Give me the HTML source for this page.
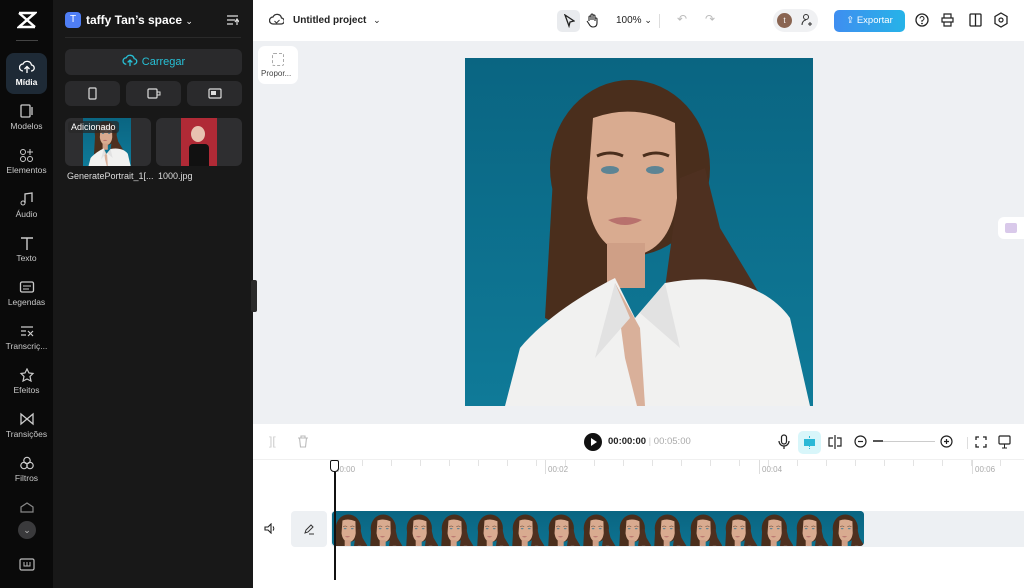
<!DOCTYPE html>
<html><head><meta charset="utf-8"><style>
*{margin:0;padding:0;box-sizing:border-box}
body{width:1024px;height:588px;overflow:hidden;font-family:"Liberation Sans",sans-serif;background:#eef0f3;position:relative}
.abs{position:absolute}
.nav{left:0;top:0;width:53px;height:588px;background:#0a0a0a}
.panel{left:53px;top:0;width:200px;height:588px;background:#181818}
.ni{position:absolute;left:0;width:53px;text-align:center;color:#c9c9c9;font-size:8.5px}
.ni svg{display:block;margin:0 auto 3px}
.top{left:253px;top:0;width:771px;height:41px;background:#fff}
.tl{left:253px;top:424px;width:771px;height:164px;background:#fff}
.btn{background:#2a2a2c;border-radius:6px;position:absolute}
.g{color:#222;font-size:10px}
</style></head><body>
<svg width="0" height="0" style="position:absolute"><defs>
<linearGradient id="bg" x1="0" y1="0" x2="0" y2="1"><stop offset="0" stop-color="#0a6582"/><stop offset="1" stop-color="#0f7a98"/></linearGradient>
<g id="por">
<rect width="348" height="348" fill="url(#bg)"/>
<ellipse cx="165" cy="110" rx="80" ry="88" fill="#4a2e1c"/>
<path d="M88 120 L80 260 L110 275 L150 250 L160 200 L100 120Z" fill="#4a2e1c"/>
<path d="M240 110 L255 170 L300 245 L250 250 L200 230 L215 120Z" fill="#4e3020"/>
<path d="M128 60 Q168 45 210 65 L212 140 Q206 192 168 198 Q128 192 122 140Z" fill="#d9ab90"/>
<rect x="142" y="185" width="38" height="45" fill="#cf9f86"/>
<path d="M143 162 Q160 156 177 162 Q160 172 143 162Z" fill="#b8716d"/>
<ellipse cx="145" cy="112" rx="9" ry="4" fill="#5d8494"/><ellipse cx="190" cy="112" rx="9" ry="4" fill="#5d8494"/>
<path d="M132 98 Q145 92 158 98 M178 98 Q191 92 204 98" stroke="#4a2e1c" stroke-width="3" fill="none"/>
<path d="M40 348 L55 290 C80 260 120 235 150 220 L170 260 L200 225 C250 215 300 225 325 260 L345 348Z" fill="#f1f1f0"/>
<path d="M150 225 L160 300 L172 348 L180 348 L175 270 Z" fill="#d9b09a"/>
<path d="M150 225 L130 300 L165 260Z M200 225 L215 290 L175 255Z" fill="#e2e2e2"/>
</g></defs></svg>

<div class="abs nav">
 <svg class="abs" style="left:17px;top:11px" width="20" height="18" viewBox="0 0 20 18"><path d="M2 2h16L2 16h16" fill="none" stroke="#fff" stroke-width="2.4"/><path d="M2 2l16 14M18 2L2 16" stroke="#fff" stroke-width="2.4"/></svg>
 <div class="abs" style="left:16px;top:40px;width:22px;height:1px;background:#444"></div>
 <div class="abs" style="left:6px;top:53px;width:41px;height:41px;background:#1e2a36;border-radius:8px"></div>
 <div class="ni" style="top:60px;color:#fff;font-weight:bold"><svg width="16" height="14" viewBox="0 0 16 14"><path d="M4 11a3.5 3.5 0 0 1 0-7 4.5 4.5 0 0 1 8.5 1 3 3 0 0 1-.5 6M8 13V7m-2.5 2L8 6.5 10.5 9" fill="none" stroke="#fff" stroke-width="1.3"/></svg>Mídia</div>
 <div class="ni" style="top:104px"><svg width="16" height="14"><rect x="2" y="1" width="9" height="12" rx="1" fill="none" stroke="#ccc" stroke-width="1.3"/><path d="M13 3v8" stroke="#ccc" stroke-width="1.3"/></svg>Modelos</div>
 <div class="ni" style="top:148px"><svg width="16" height="14"><circle cx="4" cy="4" r="2.5" fill="none" stroke="#ccc"/><circle cx="4" cy="11" r="2.5" fill="none" stroke="#ccc"/><circle cx="11" cy="11" r="2.5" fill="none" stroke="#ccc"/><path d="M11 1v6M8 4h6" stroke="#ccc"/></svg>Elementos</div>
 <div class="ni" style="top:192px"><svg width="16" height="14"><path d="M6 11V2l7-1v9" fill="none" stroke="#ccc" stroke-width="1.3"/><circle cx="4" cy="11" r="2" fill="none" stroke="#ccc"/></svg>Áudio</div>
 <div class="ni" style="top:236px"><svg width="16" height="14"><path d="M2 2h12M8 2v12" stroke="#ccc" stroke-width="1.4"/></svg>Texto</div>
 <div class="ni" style="top:280px"><svg width="16" height="14"><rect x="1.5" y="2" width="13" height="10" rx="1.5" fill="none" stroke="#ccc" stroke-width="1.3"/><path d="M4 6h8M4 9h6" stroke="#ccc"/></svg>Legendas</div>
 <div class="ni" style="top:324px"><svg width="16" height="14"><path d="M2 3h12M2 7h5M2 11h5M9 7l5 5M14 7l-5 5" stroke="#ccc" stroke-width="1.2"/></svg>Transcriç...</div>
 <div class="ni" style="top:368px"><svg width="16" height="14"><path d="M8 1l2 4 4 .5-3 3 1 4.5-4-2-4 2 1-4.5-3-3 4-.5z" fill="none" stroke="#ccc" stroke-width="1.2"/></svg>Efeitos</div>
 <div class="ni" style="top:412px"><svg width="16" height="14"><path d="M2 2v10l12-10v10z" fill="none" stroke="#ccc" stroke-width="1.3"/></svg>Transições</div>
 <div class="ni" style="top:456px"><svg width="16" height="14"><circle cx="8" cy="4.5" r="3.2" fill="none" stroke="#ccc" stroke-width="1.2"/><circle cx="5" cy="9.5" r="3.2" fill="none" stroke="#ccc" stroke-width="1.2"/><circle cx="11" cy="9.5" r="3.2" fill="none" stroke="#ccc" stroke-width="1.2"/></svg>Filtros</div>
 <svg class="abs" style="left:19px;top:501px" width="16" height="12"><path d="M2 11h12V6L8 2 2 6z" fill="none" stroke="#888" stroke-width="1.2"/></svg>
 <div class="abs" style="left:18px;top:521px;width:18px;height:18px;border-radius:50%;background:#3a3a3c;color:#bbb;font-size:9px;text-align:center;line-height:18px">⌄</div>
 <svg class="abs" style="left:19px;top:558px" width="16" height="13"><rect x="1" y="1" width="14" height="11" rx="1.5" fill="none" stroke="#bbb" stroke-width="1.2"/><path d="M5 4v4h6V4M8 4v4" stroke="#bbb"/></svg>
</div>

<div class="abs panel">
 <div class="abs" style="left:12px;top:12px;width:16px;height:16px;border-radius:4px;background:#4f7ef5;color:#fff;font-size:10px;text-align:center;line-height:16px">T</div>
 <div class="abs" style="left:33px;top:13px;color:#fff;font-size:12px;font-weight:bold">taffy Tan’s space <span style="font-weight:normal;font-size:9px">⌄</span></div>
 <svg class="abs" style="left:173px;top:14px" width="13" height="12"><path d="M1 2h11M1 6h8M1 10h6M11 5v6M9 8l2-3 2 3" stroke="#ddd" stroke-width="1.2" fill="none"/></svg>
 <div class="abs" style="left:12px;top:37px;width:176px;height:1px;background:#2a2a2a"></div>
 <div class="btn" style="left:12px;top:49px;width:177px;height:26px;color:#27c0d6;font-size:11px;text-align:center;line-height:26px"><svg width="16" height="13" viewBox="0 0 16 14" style="vertical-align:-2px;margin-right:4px"><path d="M4 11a3.5 3.5 0 0 1 0-7 4.5 4.5 0 0 1 8.5 1 3 3 0 0 1-.5 6M8 13V7m-2.5 2L8 6.5 10.5 9" fill="none" stroke="#27c0d6" stroke-width="1.4"/></svg>Carregar</div>
 <div class="btn" style="left:12px;top:81px;width:55px;height:25px"><svg style="margin:6px 0 0 23px" width="9" height="13"><rect x="1" y="1" width="7" height="11" rx="1" fill="none" stroke="#ddd" stroke-width="1.2"/></svg></div>
 <div class="btn" style="left:73px;top:81px;width:55px;height:25px"><svg style="margin:7px 0 0 21px" width="14" height="11"><rect x="1" y="1" width="9" height="9" rx="1" fill="none" stroke="#ddd" stroke-width="1.2"/><path d="M10 4h3v3h-3" fill="none" stroke="#ddd"/></svg></div>
 <div class="btn" style="left:134px;top:81px;width:55px;height:25px"><svg style="margin:7px 0 0 21px" width="14" height="11"><rect x="1" y="1" width="12" height="9" rx="1" fill="none" stroke="#ddd" stroke-width="1.2"/><rect x="3" y="3" width="5" height="4" fill="#ddd"/></svg></div>
 <div class="btn" style="left:12px;top:118px;width:86px;height:48px;overflow:hidden;background:#2e2e30"><svg class="abs" style="left:18px;top:0" width="48" height="48" viewBox="0 0 348 348"><use href="#por"/></svg><div class="abs" style="left:3px;top:3px;background:rgba(40,40,40,.75);color:#fff;font-size:9px;padding:1px 3px;border-radius:3px">Adicionado</div></div>
 <div class="btn" style="left:103px;top:118px;width:86px;height:48px;overflow:hidden;background:#2e2e30"><div class="abs" style="left:25px;top:0;width:36px;height:48px;background:#b02a36"></div><div class="abs" style="left:35px;top:8px;width:14px;height:16px;border-radius:50%;background:#e8c2b0"></div><div class="abs" style="left:33px;top:26px;width:20px;height:22px;background:#111;border-radius:4px 4px 0 0"></div></div>
 <div class="abs" style="left:14px;top:171px;color:#ddd;font-size:9px">GeneratePortrait_1[...</div>
 <div class="abs" style="left:105px;top:171px;color:#ddd;font-size:9px">1000.jpg</div>
</div>
<div class="abs" style="left:251px;top:280px;width:6px;height:32px;background:#2a2a2a;border-radius:2px"></div>

<div class="abs top">
 <svg class="abs" style="left:16px;top:13px" width="15" height="13"><path d="M4 11a3.5 3.5 0 0 1 0-7 4.5 4.5 0 0 1 8.5 1 3 3 0 0 1-.5 6z" fill="none" stroke="#333" stroke-width="1.3"/><path d="M5.5 8l2 2 3-3" fill="none" stroke="#333"/></svg>
 <div class="abs g" style="left:40px;top:15px;font-weight:bold">Untitled project <span style="font-weight:normal;font-size:9px;margin-left:4px">⌄</span></div>
 <div class="abs" style="left:304px;top:10px;width:23px;height:22px;background:#e9ebee;border-radius:5px"></div>
 <svg class="abs" style="left:310px;top:14px" width="12" height="14"><path d="M2 1l9 6-4 1 -1 4z" fill="none" stroke="#222" stroke-width="1.3"/></svg>
 <svg class="abs" style="left:333px;top:13px" width="13" height="15"><path d="M3 8V4a1 1 0 0 1 2 0v3V2a1 1 0 0 1 2 0v5V3a1 1 0 0 1 2 0v5-2a1 1 0 0 1 2 0v4c0 3-2 4-4 4s-3-1-4-3L1 8" fill="none" stroke="#222" stroke-width="1.1"/></svg>
 <div class="abs g" style="left:363px;top:15px">100% <span style="font-size:9px">⌄</span></div>
 <div class="abs" style="left:406px;top:14px;width:1px;height:14px;background:#ddd"></div>
 <div class="abs" style="left:424px;top:12px;color:#bbb;font-size:12px">↶</div>
 <div class="abs" style="left:452px;top:12px;color:#bbb;font-size:12px">↷</div>
 <div class="abs" style="left:520px;top:9px;width:45px;height:23px;background:#f0f1f3;border-radius:12px"></div>
 <div class="abs" style="left:524px;top:13px;width:15px;height:15px;border-radius:50%;background:#8a6552;color:#fff;font-size:8px;text-align:center;line-height:15px">t</div>
 <svg class="abs" style="left:548px;top:13px" width="13" height="14"><circle cx="5" cy="4" r="2.5" fill="none" stroke="#333"/><path d="M1 12c0-3 2-5 4-5M9 9v4M7 11h4" fill="none" stroke="#333"/></svg>
 <div class="abs" style="left:581px;top:10px;width:71px;height:22px;border-radius:5px;background:linear-gradient(90deg,#3f8ef0,#26b3e8);color:#fff;font-size:9.5px;text-align:center;line-height:22px">⇪ Exportar</div>
 <svg class="abs" style="left:662px;top:13px" width="14" height="14"><circle cx="7" cy="7" r="6" fill="none" stroke="#222" stroke-width="1.3"/><path d="M5 5.5a2 2 0 1 1 2 2v1.5" fill="none" stroke="#222"/><circle cx="7" cy="10.5" r=".8"/></svg>
 <svg class="abs" style="left:688px;top:13px" width="13" height="14"><path d="M3 1h7v4H3zM1 5h11v4H1zM3 9h7v4H3z" fill="none" stroke="#222" stroke-width="1.2"/></svg>
 <svg class="abs" style="left:716px;top:13px" width="13" height="14"><rect x="1" y="1" width="11" height="12" rx="1" fill="none" stroke="#222" stroke-width="1.3"/><path d="M6.5 1v12" stroke="#222" stroke-width="1.3"/></svg>
 <svg class="abs" style="left:741px;top:12px" width="14" height="16"><path d="M7 1l6 3.5v7L7 15l-6-3.5v-7z" fill="none" stroke="#222" stroke-width="1.3"/><circle cx="7" cy="8" r="2" fill="none" stroke="#222" stroke-width="1.2"/></svg>
</div>

<div class="abs" style="left:258px;top:46px;width:40px;height:38px;background:#fff;border-radius:7px"></div>
<div class="abs" style="left:272px;top:53px;width:12px;height:13px;border:1px dashed #aaa;border-radius:2px"></div>
<div class="abs" style="left:261px;top:69px;font-size:8px;color:#444">Propor...</div>
<div class="abs" style="left:998px;top:217px;width:26px;height:22px;background:#fff;border-radius:6px 0 0 6px"></div>
<div class="abs" style="left:1005px;top:223px;width:12px;height:10px;background:#d9c9ea;border-radius:2px"></div>

<svg class="abs" style="left:465px;top:58px" width="348" height="348" viewBox="0 0 348 348"><use href="#por"/></svg>

<div class="abs tl">
 <div class="abs" style="left:16px;top:10px;color:#ccc;font-size:12px">][</div>
 <svg class="abs" style="left:44px;top:11px" width="12" height="13"><path d="M1 3h10M4 3V1h4v2M2.5 3l1 9h5l1-9" fill="none" stroke="#bbb" stroke-width="1.1"/></svg>
 <div class="abs" style="left:331px;top:9px;width:18px;height:18px;border-radius:50%;background:#111"></div>
 <div class="abs" style="left:338px;top:14px;width:0;height:0;border-left:6px solid #fff;border-top:4px solid transparent;border-bottom:4px solid transparent"></div>
 <div class="abs" style="left:355px;top:12px;font-size:9.5px;font-weight:bold;color:#222">00:00:00 <span style="color:#ccc;font-weight:normal">|</span> <span style="color:#aaa;font-weight:normal">00:05:00</span></div>
 <svg class="abs" style="left:525px;top:10px" width="12" height="16"><rect x="3.5" y="1" width="5" height="9" rx="2.5" fill="none" stroke="#222" stroke-width="1.2"/><path d="M1 7a5 5 0 0 0 10 0M6 12v3" fill="none" stroke="#222" stroke-width="1.2"/></svg>
 <div class="abs" style="left:545px;top:7px;width:23px;height:23px;background:#d8f6fa;border-radius:5px"></div>
 <svg class="abs" style="left:550px;top:12px" width="13" height="13"><rect x="1" y="3" width="11" height="7" fill="#2ab8d6"/><path d="M6.5 0v13" stroke="#2ab8d6" stroke-dasharray="2 1"/></svg>
 <svg class="abs" style="left:575px;top:11px" width="14" height="14"><path d="M7 0v14M5 3H1v8h4M9 3h4v8H9" fill="none" stroke="#222" stroke-width="1.2"/></svg>
 <svg class="abs" style="left:601px;top:11px" width="13" height="13"><circle cx="6.5" cy="6.5" r="5.5" fill="none" stroke="#222" stroke-width="1.2"/><path d="M4 6.5h5" stroke="#222" stroke-width="1.2"/></svg>
 <div class="abs" style="left:620px;top:17px;width:62px;height:1px;background:#ccc"></div>
 <div class="abs" style="left:620px;top:16px;width:10px;height:2px;background:#555"></div>
 <svg class="abs" style="left:687px;top:11px" width="13" height="13"><circle cx="6.5" cy="6.5" r="5.5" fill="none" stroke="#222" stroke-width="1.2"/><path d="M4 6.5h5M6.5 4v5" stroke="#222" stroke-width="1.2"/></svg>
 <div class="abs" style="left:714px;top:13px;width:1px;height:12px;background:#ddd"></div>
 <svg class="abs" style="left:722px;top:12px" width="12" height="12"><path d="M1 4V1h3M8 1h3v3M11 8v3H8M4 11H1V8" fill="none" stroke="#222" stroke-width="1.3"/></svg>
 <svg class="abs" style="left:745px;top:11px" width="13" height="14"><rect x="1" y="1" width="11" height="8" rx="1" fill="none" stroke="#222" stroke-width="1.2"/><path d="M6.5 9v4M4 13h5" stroke="#222"/></svg>
 <div class="abs" style="left:0;top:35px;width:771px;height:1px;background:#f0f0f0"></div>
 <div class="abs" style="left:80px;top:36px;width:691px;height:6px;background:repeating-linear-gradient(90deg,#e3e3e3 0 1px,transparent 1px 29px)"></div>
 <div class="abs" style="left:82px;top:41px;font-size:8px;color:#aaa">00:00</div>
 <div class="abs" style="left:292px;top:36px;width:1px;height:14px;background:#ddd"></div><div class="abs" style="left:295px;top:41px;font-size:8px;color:#aaa">00:02</div>
 <div class="abs" style="left:506px;top:36px;width:1px;height:14px;background:#ddd"></div><div class="abs" style="left:509px;top:41px;font-size:8px;color:#aaa">00:04</div>
 <div class="abs" style="left:719px;top:36px;width:1px;height:14px;background:#ddd"></div><div class="abs" style="left:722px;top:41px;font-size:8px;color:#aaa">00:06</div>
 <svg class="abs" style="left:11px;top:99px" width="12" height="11"><path d="M1 4h3l3-3v9L4 7H1z M9 3.5a3 3 0 0 1 0 4" fill="none" stroke="#222" stroke-width="1.1"/></svg>
 <div class="abs" style="left:38px;top:87px;width:36px;height:36px;background:#edf0f3;border-radius:4px"></div>
 <svg class="abs" style="left:50px;top:99px" width="12" height="12"><path d="M2 10l1-3 5-5 2 2-5 5zM6 11h5" fill="none" stroke="#333"/></svg>
 <div class="abs" style="left:78px;top:87px;width:693px;height:36px;background:#edf0f3;border-radius:4px 0 0 4px"></div>
 <div class="abs" style="left:79px;top:87px;width:532px;height:35px;border-radius:4px;overflow:hidden;display:flex;background:#0d6f8d">
  <svg width="36" height="35" viewBox="60 0 228 222" preserveAspectRatio="xMidYMid slice"><use href="#por"/></svg><svg width="36" height="35" viewBox="60 0 228 222" preserveAspectRatio="xMidYMid slice"><use href="#por"/></svg><svg width="36" height="35" viewBox="60 0 228 222" preserveAspectRatio="xMidYMid slice"><use href="#por"/></svg><svg width="36" height="35" viewBox="60 0 228 222" preserveAspectRatio="xMidYMid slice"><use href="#por"/></svg><svg width="36" height="35" viewBox="60 0 228 222" preserveAspectRatio="xMidYMid slice"><use href="#por"/></svg><svg width="36" height="35" viewBox="60 0 228 222" preserveAspectRatio="xMidYMid slice"><use href="#por"/></svg><svg width="36" height="35" viewBox="60 0 228 222" preserveAspectRatio="xMidYMid slice"><use href="#por"/></svg><svg width="36" height="35" viewBox="60 0 228 222" preserveAspectRatio="xMidYMid slice"><use href="#por"/></svg><svg width="36" height="35" viewBox="60 0 228 222" preserveAspectRatio="xMidYMid slice"><use href="#por"/></svg><svg width="36" height="35" viewBox="60 0 228 222" preserveAspectRatio="xMidYMid slice"><use href="#por"/></svg><svg width="36" height="35" viewBox="60 0 228 222" preserveAspectRatio="xMidYMid slice"><use href="#por"/></svg><svg width="36" height="35" viewBox="60 0 228 222" preserveAspectRatio="xMidYMid slice"><use href="#por"/></svg><svg width="36" height="35" viewBox="60 0 228 222" preserveAspectRatio="xMidYMid slice"><use href="#por"/></svg><svg width="36" height="35" viewBox="60 0 228 222" preserveAspectRatio="xMidYMid slice"><use href="#por"/></svg><svg width="36" height="35" viewBox="60 0 228 222" preserveAspectRatio="xMidYMid slice"><use href="#por"/></svg>
 </div>
 <div class="abs" style="left:77px;top:36px;width:9px;height:12px;border:1.5px solid #111;border-radius:2px 2px 4px 4px;background:#fff"></div>
 <div class="abs" style="left:81px;top:48px;width:1.5px;height:108px;background:#111"></div>
</div>
</body></html>
